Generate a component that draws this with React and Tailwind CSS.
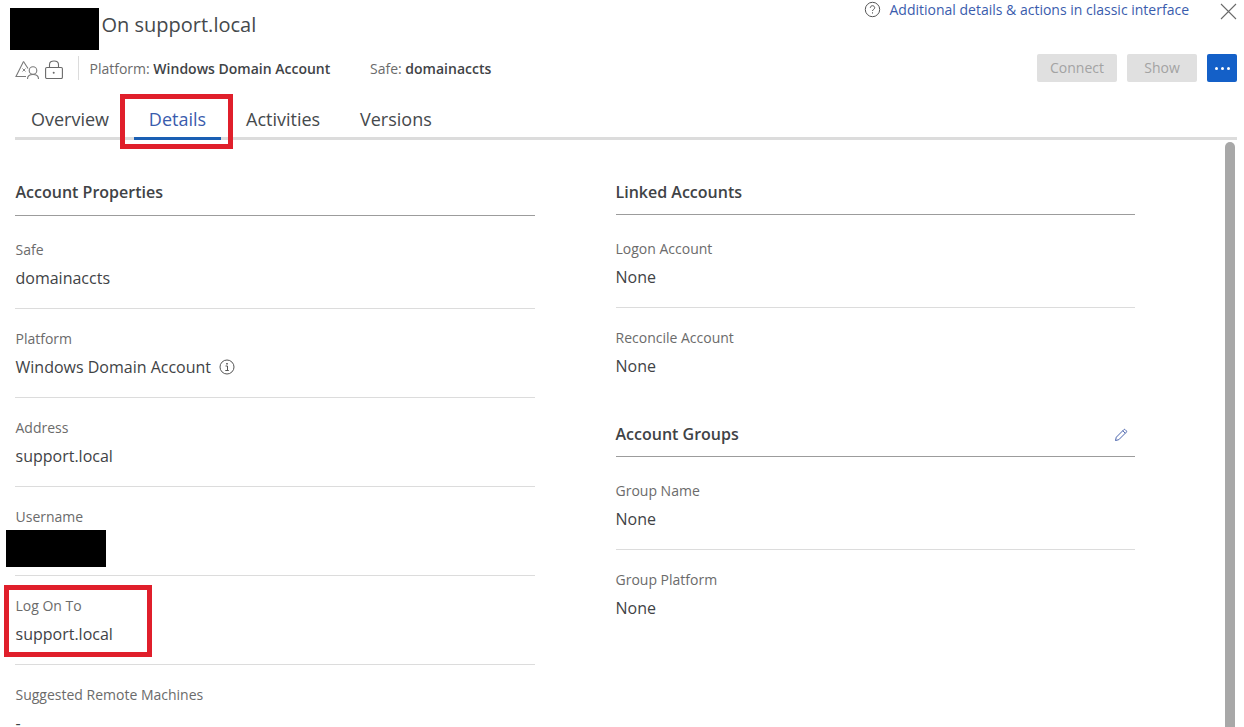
import React from "react";

function Field({ label, children, last, inset }) {
  return (
    <div className={last ? "h-[89px] pt-[20px]" : "h-[89px] pt-[20px] border-b border-[#dcdcdc]"}>
      <div className={inset ? "pl-[0.5px] text-[14px] leading-[20px] text-[#6b6b6b]" : "-ml-[0.5px] text-[14px] leading-[20px] text-[#6b6b6b]"}>{label}</div>
      <div className={inset ? "pl-[0.5px] mt-[7px] text-[16px] leading-[22px] text-[#3f4346]" : "-ml-[0.5px] mt-[7px] text-[16px] leading-[22px] text-[#3f4346]"}>{children}</div>
    </div>
  );
}

function Section({ title, action, children, inset }) {
  return (
    <div>
      <div className={inset ? "h-[43px] pl-[0.5px] flex items-center justify-between border-b border-[#9c9c9c] pb-[4px]" : "h-[42px] flex items-center justify-between border-b border-[#9c9c9c] pb-[3px]"}>
        <h2 className={inset ? "text-[16px] font-semibold text-[#3f4346]" : "-ml-[0.5px] text-[16px] font-semibold text-[#3f4346]"}>{title}</h2>
        {action}
      </div>
      <div className="pt-[4px]">{children}</div>
    </div>
  );
}

export default function App() {
  return (
    <div className="relative w-[1244px] h-[727px] overflow-hidden bg-white font-['Open_Sans',sans-serif]">
      <header className="flex justify-between h-[54px]">
        <div className="flex items-start pl-[10px] pt-[8px]">
          <div className="w-[89px] h-[42px] bg-black" />
          <span className="ml-[2.500px] mt-[3px] text-[20px] leading-[28px] text-[#45494c]">On support.local</span>
        </div>
        <div className="flex items-start pr-[7px]">
          <div className="flex items-center gap-[9px] h-[19px] text-[14px] text-[#3a5cad]">
            <svg width="17" height="17" viewBox="0 0 17 17" fill="none" stroke="#555" strokeWidth="1">
              <circle cx="8.500" cy="8.500" r="7.200" />
              <path d="M6.300 6.800c0-1.300 1.100-2.100 2.200-2.100s2.200 .8 2.200 2c0 1.700-2.200 1.700-2.200 3.300" />
              <path d="M8.500 11.300v1.200" />
            </svg>
            <a>Additional details &amp; actions in classic interface</a>
          </div>
          <svg className="ml-[31px] mt-[3px]" width="17" height="17" viewBox="0 0 17 17" fill="none" stroke="#6a6a6a" strokeWidth="1.100">
            <path d="M1 1l15 15M16 1L1 16" />
          </svg>
        </div>
      </header>

      <div className="flex items-center justify-between h-[28px] pl-[15px] pr-[7px]">
        <div className="flex items-center">
          <svg width="24" height="22" viewBox="0 0 24 22" fill="none" stroke="#7a7a7a" strokeWidth="1.100">
            <path d="M8.500 4.500L1 19.500h10" />
            <path d="M8.500 4.500l4.500 7" />
            <path d="M7.500 11.500l3 3M10.500 11.500l-3 3" strokeWidth="0.900" />
            <circle cx="18" cy="13.500" r="3.800" />
            <path d="M12.500 22c0-3.500 2.500-4.500 5.500-4.500s5.500 1 5.500 4.500" />
          </svg>
          <svg className="ml-[6px]" width="18" height="22" viewBox="0 0 18 22" fill="none" stroke="#6a6a6a" strokeWidth="1.100">
            <rect x="0.600" y="10.500" width="16.800" height="11" rx="1.200" />
            <path d="M4.500 10.500V7.500c0-2.500 2-3.500 4.500-3.500s4.500 1 4.500 3.500v3" />
            <circle cx="8.700" cy="15.800" r="1" fill="#6a6a6a" stroke="none" />
          </svg>
          <div className="ml-[15px] mr-[10.500px] w-px h-[24px] bg-[#dcdcdc]" />
          <div className="w-[280.500px] text-[14px] text-[#6b6b6b]">
            Platform: <span className="font-semibold text-[#3f4346]">Windows Domain Account</span>
          </div>
          <div className="text-[14px] text-[#6b6b6b]">
            Safe: <span className="font-semibold text-[#3f4346]">domainaccts</span>
          </div>
        </div>
        <div className="flex items-center gap-[10px]">
          <button className="w-[80px] h-[28px] pb-[2px] rounded-[2px] bg-[#e0e0e0] text-[14px] text-[#a3a3a3]">Connect</button>
          <button className="w-[70px] h-[28px] pb-[2px] rounded-[2px] bg-[#e0e0e0] text-[14px] text-[#a3a3a3]">Show</button>
          <button className="w-[30px] h-[28px] rounded-[2px] bg-[#1460c8] flex items-center justify-center gap-[3px]">
            <span className="w-[3px] h-[3px] rounded-full bg-white" />
            <span className="w-[3px] h-[3px] rounded-full bg-white" />
            <span className="w-[3px] h-[3px] rounded-full bg-white" />
          </button>
        </div>
      </div>

      <nav className="mt-[13px] ml-[15px] mr-[7px] h-[45px] flex border-b-[3px] border-[#dcdcdc] text-[18px] text-[#45494c]">
        <div className="w-[119px] pl-[16px] pt-[12px] leading-[24px]">Overview</div>
        <div className="w-[87px] text-center pt-[12px] leading-[24px] text-[#3a5cad] h-[45px] border-b-[3px] border-[#1a5fb4]">Details</div>
        <div className="w-[139px] pl-[25px] pt-[12px] leading-[24px]">Activities</div>
        <div className="pt-[12px] leading-[24px]">Versions</div>
      </nav>

      <main className="flex pl-[15px] pt-[33px]">
        <div className="w-[520px]">
          <Section title="Account Properties" inset>
            <Field inset label="Safe">domainaccts</Field>
            <Field inset label="Platform">
              <span className="flex items-center gap-[8px]">
                Windows Domain Account
                <svg width="16" height="16" viewBox="0 0 16 16" fill="none" stroke="#555" strokeWidth="1">
                  <circle cx="8" cy="8" r="7" />
                  <path d="M6.500 7h2v4.500M6.300 11.500h3.500" />
                  <path d="M8 4v1.400" strokeWidth="1.600" />
                </svg>
              </span>
            </Field>
            <Field inset label="Address">support.local</Field>
            <Field inset label="Username">
              <div className="-ml-[9.500px] -mt-[4px] w-[100px] h-[37px] bg-black" />
            </Field>
            <Field inset label="Log On To">support.local</Field>
            <Field inset label="Suggested Remote Machines" last>-</Field>
          </Section>
        </div>
        <div className="ml-[81px] w-[519px]">
          <Section title="Linked Accounts">
            <Field label="Logon Account">None</Field>
            <Field label="Reconcile Account" last>None</Field>
          </Section>
          <div className="mt-[18px]">
            <Section
              title="Account Groups"
              action={
                <svg className="mr-[7px] mt-[2px]" width="14" height="14" viewBox="0 0 14 14" fill="none" stroke="#4a64ad" strokeWidth="1">
                  <path d="M1.500 12.500l.8-3.300L9.800 1.700a1 1 0 0 1 1.400 0l1.100 1.100a1 1 0 0 1 0 1.400L4.800 11.700z" />
                  <path d="M8.800 2.700l2.500 2.500" />
                </svg>
              }
            >
              <Field label="Group Name">None</Field>
              <Field label="Group Platform" last>None</Field>
            </Section>
          </div>
        </div>
      </main>

      <div className="absolute left-[1225px] top-[142px] bottom-0 w-[10px] rounded-t-[5px] bg-[#a8a8a8]" />
      <div className="absolute left-[120px] top-[94px] w-[113px] h-[55px] border-[5px] border-[#e01f2b]" />
      <div className="absolute left-[4px] top-[585px] w-[148px] h-[72px] border-[5px] border-[#e01f2b]" />
    </div>
  );
}
